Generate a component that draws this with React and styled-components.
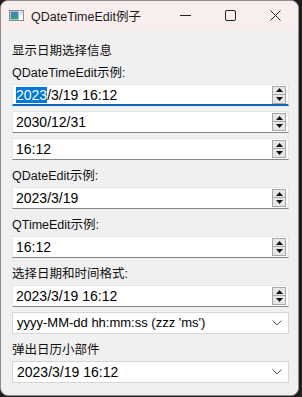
import React from 'react';
import styled, { createGlobalStyle } from 'styled-components';

const GlobalStyle = createGlobalStyle`
  html, body {
    margin: 0;
    padding: 0;
    background: #1f1f1f;
  }
`

const FONT = `"Liberation Sans", "Noto Sans CJK SC", sans-serif`;

const SpinButtons = () => (
  <Spin>
    <SpinBtn>
      <svg width="7" height="4" viewBox="0 0 7 4"><path d="M3.5 0 L7 4 L0 4 Z" fill="#111" /></svg>
    </SpinBtn>
    <SpinBtn>
      <svg width="7" height="4" viewBox="0 0 7 4"><path d="M0 0 L7 0 L3.5 4 Z" fill="#111" /></svg>
    </SpinBtn>
  </Spin>
);

const Chevron = () => (
  <ChevronBox>
    <svg width="10" height="6" viewBox="0 0 10 6">
      <path d="M0.5 0.5 L5 5 L9.5 0.5" stroke="#555" strokeWidth="1" fill="none" />
    </svg>
  </ChevronBox>
);

const SpinEdit = ({ children, focused }) => (
  <Edit focused={focused}>
    <EditText>{children}</EditText>
    <SpinButtons />
  </Edit>
);

const App = () => (
  <>
    <GlobalStyle />
    <Window>
      <TitleBar>
        <AppIcon>
          <svg width="15" height="11" viewBox="0 0 15 11">
            <rect x="0.5" y="0.5" width="14" height="10" fill="#fff" stroke="#8a8a8a" />
            <defs>
              <linearGradient id="g" x1="0" y1="0" x2="0" y2="1">
                <stop offset="0" stopColor="#3d7fc0" />
                <stop offset="1" stopColor="#3aa07a" />
              </linearGradient>
            </defs>
            <rect x="1.5" y="1.5" width="8" height="8" fill="url(#g)" />
            <rect x="10.5" y="1.5" width="3" height="3" fill="#c8d6e6" />
          </svg>
        </AppIcon>
        <Title>QDateTimeEdit例子</Title>
        <Controls>
          <Ctrl>
            <svg width="11" height="11" viewBox="0 0 11 11"><path d="M0 5.5 H11" stroke="#222" strokeWidth="1" /></svg>
          </Ctrl>
          <Ctrl>
            <svg width="11" height="11" viewBox="0 0 11 11"><rect x="0.5" y="0.5" width="10" height="10" rx="1.5" stroke="#222" fill="none" /></svg>
          </Ctrl>
          <Ctrl>
            <svg width="11" height="11" viewBox="0 0 11 11"><path d="M0.5 0.5 L10.5 10.5 M10.5 0.5 L0.5 10.5" stroke="#222" strokeWidth="1" /></svg>
          </Ctrl>
        </Controls>
      </TitleBar>
      <Body>
        <Label>显示日期选择信息</Label>
        <Label>QDateTimeEdit示例:</Label>
        <SpinEdit focused><Selected>2023</Selected>/3/19 16:12</SpinEdit>
        <SpinEdit>2030/12/31</SpinEdit>
        <SpinEdit>16:12</SpinEdit>
        <Label>QDateEdit示例:</Label>
        <SpinEdit>2023/3/19</SpinEdit>
        <Label>QTimeEdit示例:</Label>
        <SpinEdit>16:12</SpinEdit>
        <Label>选择日期和时间格式:</Label>
        <SpinEdit>2023/3/19 16:12</SpinEdit>
        <Combo>
          <ComboText small>yyyy-MM-dd hh:mm:ss (zzz 'ms')</ComboText>
          <Chevron />
        </Combo>
        <Label>弹出日历小部件</Label>
        <Combo>
          <ComboText>2023/3/19 16:12</ComboText>
          <Chevron />
        </Combo>
      </Body>
    </Window>
  </>
);

export default App;

const Window = styled.div`
  box-sizing: border-box;
  width: 299px;
  height: 396px;
  border: 1px solid #8c8c8c;
  border-radius: 8px;
  overflow: hidden;
  background: #f0f0f0;
  font-family: ${FONT};
  color: #000;
`

const TitleBar = styled.div`
  display: flex;
  align-items: center;
  height: 29px;
  background: #f8eeed;
`

const AppIcon = styled.div`
  display: flex;
  margin-left: 8px;
  margin-right: 7px;
`

const Title = styled.div`
  flex: 1;
  font-size: 12.5px;
  color: #1a1a1a;
`

const Controls = styled.div`
  display: flex;
  height: 100%;
`

const Ctrl = styled.div`
  display: flex;
  align-items: center;
  justify-content: center;
  width: 45px;
  height: 100%;
`

const Body = styled.div`
  display: flex;
  flex-direction: column;
  gap: 5px;
  padding: 10px 9px 0 11px;
`

const Label = styled.div`
  box-sizing: border-box;
  height: 17px;
  padding-top: 4px;
  font-size: 12.5px;
  line-height: 14px;
  color: #111;
  white-space: nowrap;
`

const Edit = styled.div`
  box-sizing: border-box;
  display: flex;
  align-items: center;
  height: 22px;
  padding: 0 2px 0 3px;
  background: #fff;
  border: 1px solid #e6e6e6;
  border-bottom: ${p => (p.focused ? '2px solid #0067c0' : '1px solid #868686')};
`

const EditText = styled.div`
  flex: 1;
  font-size: 14px;
  line-height: 16px;
  white-space: nowrap;
`

const Selected = styled.span`
  background: #0078d7;
  color: #fff;
`

const Spin = styled.div`
  display: flex;
  flex-direction: column;
  width: 14px;
`

const SpinBtn = styled.div`
  box-sizing: border-box;
  display: flex;
  align-items: center;
  justify-content: center;
  height: 9px;
  border: 1px solid #a8a8a8;
  background: #e6e6e6;

  & + & {
    border-top: none;
  }
`

const Combo = styled.div`
  box-sizing: border-box;
  display: flex;
  align-items: center;
  height: 22px;
  padding: 0 6px 0 4px;
  background: #fff;
  border: 1px solid #d6d6d6;
`

const ComboText = styled.div`
  flex: 1;
  font-size: ${p => (p.small ? '13px' : '14px')};
  line-height: 16px;
  white-space: nowrap;
`

const ChevronBox = styled.div`
  display: flex;
  align-items: center;
`
